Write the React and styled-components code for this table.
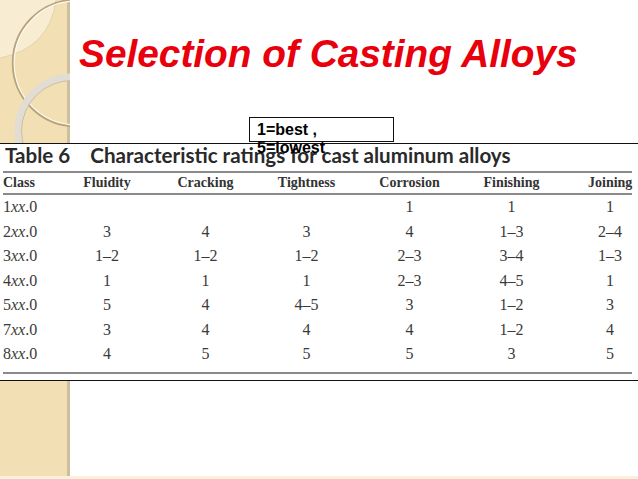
import React from "react";
import styled, { createGlobalStyle } from "styled-components";

const columns = ["Fluidity", "Cracking", "Tightness", "Corrosion", "Finishing", "Joining"];

const rows = [
  { cls: "1", values: ["", "", "", "1", "1", "1"] },
  { cls: "2", values: ["3", "4", "3", "4", "1–3", "2–4"] },
  { cls: "3", values: ["1–2", "1–2", "1–2", "2–3", "3–4", "1–3"] },
  { cls: "4", values: ["1", "1", "1", "2–3", "4–5", "1"] },
  { cls: "5", values: ["5", "4", "4–5", "3", "1–2", "3"] },
  { cls: "7", values: ["3", "4", "4", "4", "1–2", "4"] },
  { cls: "8", values: ["4", "5", "5", "5", "3", "5"] },
];

// decorative art on the tan side band
const BandDecor = () => (
  <BandArt viewBox="0 0 70 143" width="70" height="143">
    <path d="M0 0 H56 Q50 48 0 58 Z" fill="#f8edd3" />
    <path d="M56 0 Q50 48 0 58" fill="none" stroke="#e4d3ad" strokeWidth="1" />
    <circle cx="76" cy="63" r="63" fill="none" stroke="#b8a57e" strokeWidth="2.4" />
    <circle cx="76" cy="63" r="61.8" fill="none" stroke="#fffaf0" strokeWidth="1.2" />
    <circle cx="72" cy="131" r="54" fill="none" stroke="#e2ddd2" strokeWidth="7" />
    <circle cx="72" cy="131" r="50.5" fill="none" stroke="#c9bea6" strokeWidth="1" />
  </BandArt>
);

const App = () => {
  return (
    <>
      <GlobalStyle />
      <Slide>
        <Header>
          <BandDecor />
          <TitleArea>
            <Title>Selection of Casting Alloys</Title>
            <Legend>
              <LegendLine>1=best ,</LegendLine>
              <LegendLine>5=lowest</LegendLine>
            </Legend>
          </TitleArea>
        </Header>

        <TablePanel>
          <Caption>
            <span>Table 6</span>
            <span>Characteristic ratings for cast aluminum alloys</span>
          </Caption>
          <HeadRow>
            <HeadCell $left>Class</HeadCell>
            {columns.map((c, i) => (
              <HeadCell key={c} $last={i === columns.length - 1}>
                {c}
              </HeadCell>
            ))}
          </HeadRow>
          <Body>
            {rows.map((r) => (
              <Row key={r.cls}>
                <Cell $left>
                  {r.cls}
                  <i>xx</i>.0
                </Cell>
                {r.values.map((v, i) => (
                  <Cell key={i} $last={i === r.values.length - 1}>
                    {v}
                  </Cell>
                ))}
              </Row>
            ))}
          </Body>
        </TablePanel>

        <Footer />
      </Slide>
    </>
  );
};

export default App;

// Styled Components
const GlobalStyle = createGlobalStyle`
  body {
    margin: 0;
    background: #fff;
  }
`;

const Slide = styled.div`
  width: 638px;
  height: 479px;
  display: flex;
  flex-direction: column;
  overflow: hidden;
  background: linear-gradient(
    to right,
    #f2dfb3 0,
    #f2dfb3 67px,
    #cdbf9e 67px,
    #cdbf9e 70px,
    #ffffff 70px
  );
`;

const Header = styled.div`
  height: 143px;
  display: flex;
  flex-shrink: 0;
`;

const BandArt = styled.svg`
  flex-shrink: 0;
  display: block;
`;

const TitleArea = styled.div`
  display: flex;
  flex-direction: column;
  align-items: flex-start;
  padding: 33px 0 0 9px;
`;

const Title = styled.h1`
  margin: 0;
  font-family: "Liberation Sans", Arial, sans-serif;
  font-size: 38.8px;
  line-height: 42px;
  font-weight: bold;
  font-style: italic;
  color: #e8000c;
  white-space: nowrap;
`;

const Legend = styled.div`
  position: relative;
  z-index: 2;
  box-sizing: border-box;
  width: 145px;
  height: 25px;
  margin: 42px 0 0 170px;
  padding: 3px 0 0 7px;
  border: 1.5px solid #111;
  background: #fff;
  font-family: "Liberation Sans", Arial, sans-serif;
  font-size: 16px;
  line-height: 18px;
  font-weight: bold;
  color: #000;
`;

const LegendLine = styled.span`
  display: block;
  white-space: nowrap;
`;

const TablePanel = styled.div`
  position: relative;
  z-index: 1;
  flex-shrink: 0;
  background: #fff;
  border-top: 1.5px solid #111;
  border-bottom: 1.5px solid #111;
  padding: 0 6px 0 3px;
`;

const Caption = styled.div`
  display: flex;
  gap: 20px;
  padding: 2px 0 7px 2px;
  border-bottom: 2px solid #8a8a8a;
  font-family: Lato, "Open Sans", sans-serif;
  font-weight: 700;
  font-size: 20.6px;
  line-height: 18px;
  color: #2a2a2a;
  white-space: nowrap;
`;

const gridColumns = "55px 98px 99px 103px 103px 101px 1fr";

const HeadRow = styled.div`
  display: grid;
  grid-template-columns: ${gridColumns};
  height: 20px;
  align-items: center;
  border-bottom: 2px solid #8a8a8a;
`;

const HeadCell = styled.div`
  font-family: "Liberation Serif", "Times New Roman", serif;
  font-weight: bold;
  font-size: 14px;
  line-height: 20px;
  color: #333;
  text-align: ${({ $left }) => ($left ? "left" : "center")};
  justify-self: ${({ $last }) => ($last ? "end" : "stretch")};
  width: ${({ $last }) => ($last ? "44px" : "auto")};
  white-space: nowrap;
`;

const Body = styled.div`
  padding-bottom: 5px;
  border-bottom: 2px solid #8a8a8a;
  margin-bottom: 6px;
`;

const Row = styled.div`
  display: grid;
  grid-template-columns: ${gridColumns};
  height: 24.5px;
  align-items: center;
`;

const Cell = styled.div`
  font-family: "Liberation Serif", "Times New Roman", serif;
  font-size: 16px;
  line-height: 24.5px;
  color: #3a3a3a;
  text-align: ${({ $left }) => ($left ? "left" : "center")};
  justify-self: ${({ $last }) => ($last ? "end" : "stretch")};
  width: ${({ $last }) => ($last ? "44px" : "auto")};
  white-space: nowrap;

  i {
    font-style: italic;
  }
`;

const Footer = styled.div`
  flex: 1;
  border-bottom: 3px solid #faf1dc;
`;
